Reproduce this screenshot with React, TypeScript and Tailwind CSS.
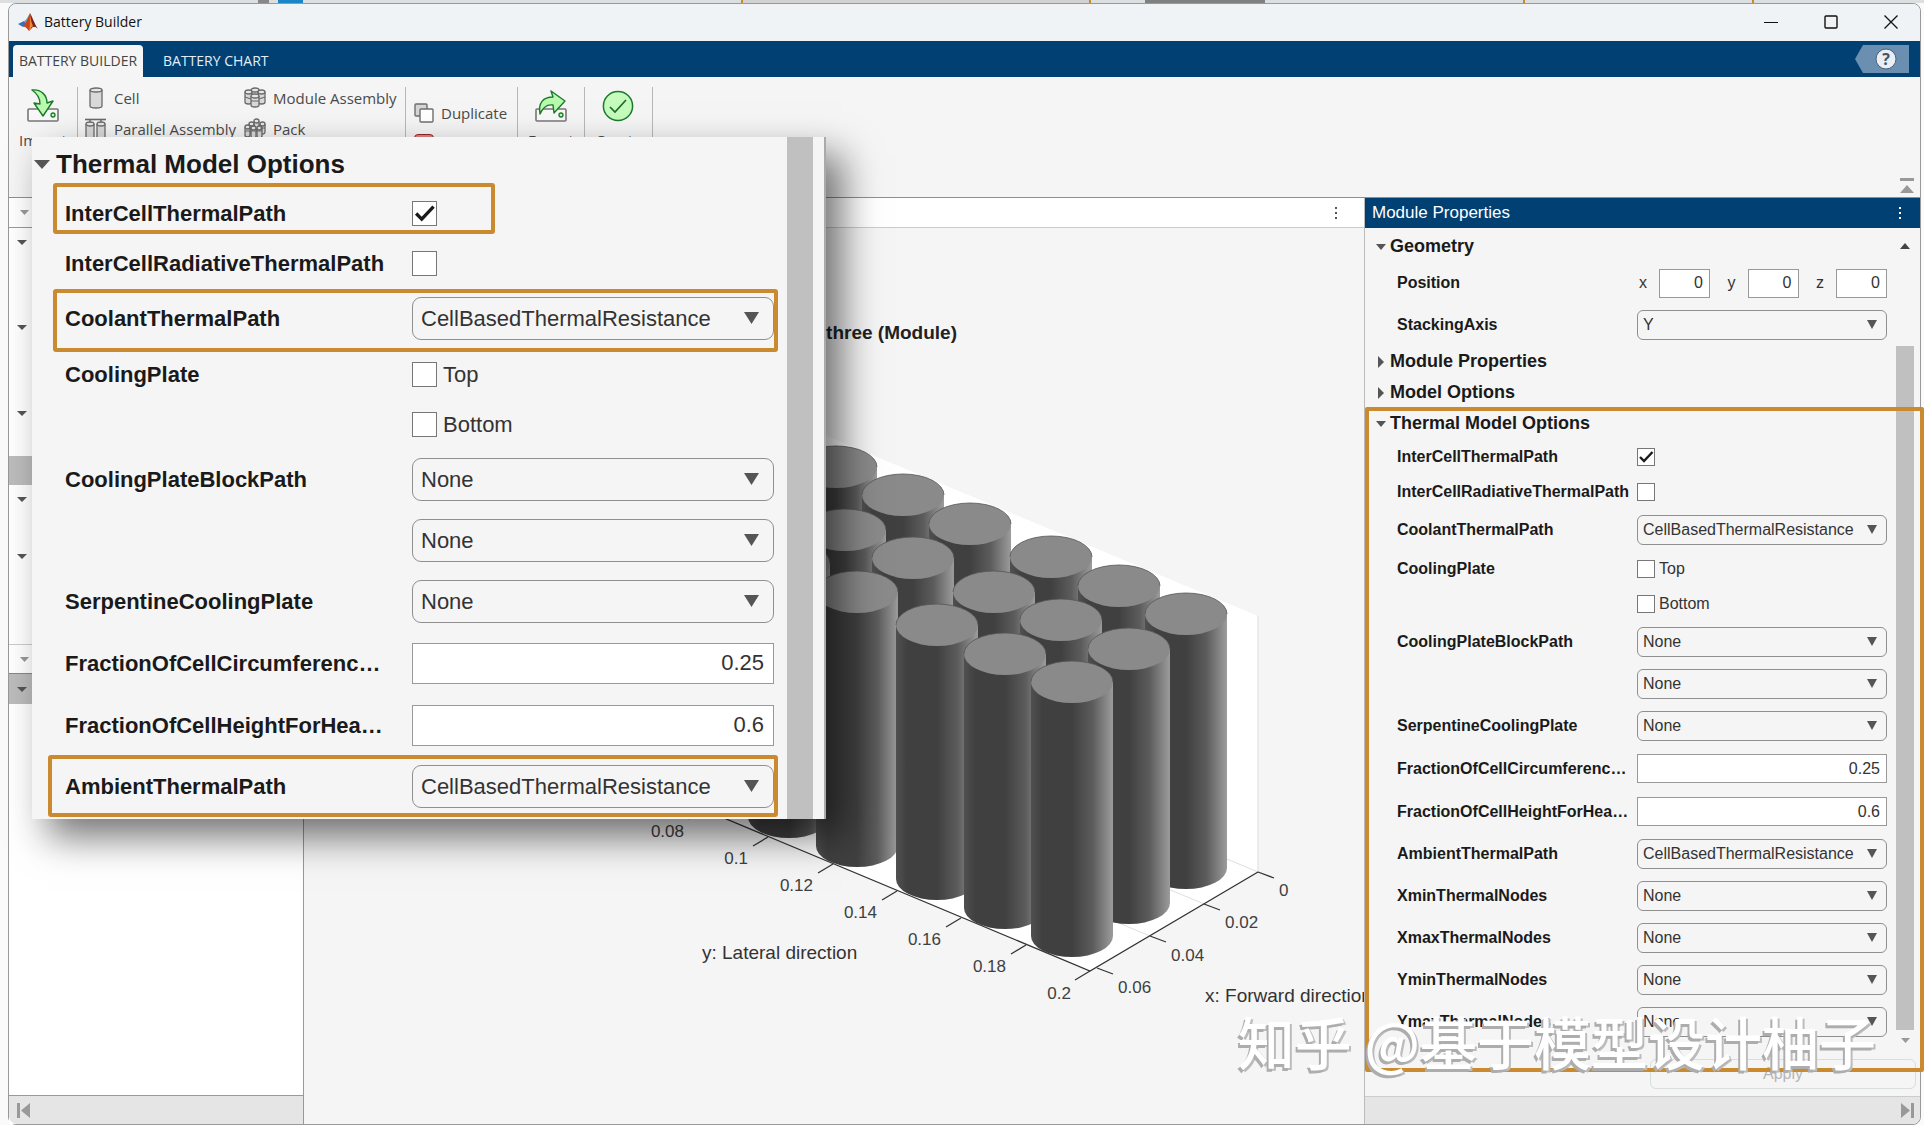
import type { ReactNode } from "react";

const uiFont = "font-['Liberation_Sans',Arial,sans-serif]";
const segoe = "font-['Open_Sans','Noto_Sans',sans-serif]";

/* ---------- icons ---------- */

function Logo() {
  return (
    <svg viewBox="0 0 20 20" className="h-5 w-5">
      <path d="M0 12 L6 9 L9 12 L5 15 Z" fill="#3d6fb6" />
      <path d="M6 9 C9 8 10 4 12 1 L9 12 Z" fill="#5aa7c9" />
      <path d="M12 1 C10 6 9 9 5 15 C8 14 9 17 11 19 C13 18 14 14 16 14 C14 9 13 4 12 1 Z" fill="#c9441c" />
      <path d="M12 1 C14 4 16 11 20 17 C17 14 15 14 13 17 C14 10 13 5 12 1 Z" fill="#7c2413" />
      <path d="M11 19 C12 15 12 10 12 4 C13 9 14 12 15 14 C13 15 12 18 11 19 Z" fill="#ee8a3a" />
    </svg>
  );
}

function DriveBox() {
  return (
    <>
      <rect x="1" y="20" width="30" height="12" rx="1" fill="#f8f8f8" stroke="#777" strokeWidth="1.6" />
      <circle cx="26" cy="26" r="2" fill="#b6ffa8" stroke="#1c7a2c" strokeWidth="1.3" />
    </>
  );
}

function ImportIcon() {
  return (
    <svg viewBox="0 0 32 34" className="h-[34px] w-8">
      <DriveBox />
      <path d="M5 1 C14 0 20 6 20 14 L26 12 L16 27 L7 14 L13 15 C13 9 11 5 5 1 Z" fill="#b9fbae" stroke="#1c7a2c" strokeWidth="1.4" strokeLinejoin="round" />
    </svg>
  );
}

function ExportIcon() {
  return (
    <svg viewBox="0 0 32 34" className="h-[34px] w-8">
      <DriveBox />
      <path d="M5 25 C3 14 8 8 18 8 L16 2 L30 12 L19 24 L18 16 C12 15 8 18 5 25 Z" fill="#b9fbae" stroke="#1c7a2c" strokeWidth="1.4" strokeLinejoin="round" />
    </svg>
  );
}

function CheckIcon() {
  return (
    <svg viewBox="0 0 32 34" className="h-[34px] w-8">
      <circle cx="16" cy="17" r="14.6" fill="#c5fbbd" stroke="#1c7a2c" strokeWidth="1.5" />
      <path d="M8 18 L13 23 L24 11" fill="none" stroke="#1f6b2c" strokeWidth="1.7" />
    </svg>
  );
}

function Can({ x, y, w, h }: { x: number; y: number; w: number; h: number }) {
  const r = w / 2;
  return (
    <g fill="#d9d9d9" stroke="#6a6a6a" strokeWidth="1.3">
      <path d={`M${x} ${y + 2} V${y + h - 2} A${r} 2 0 0 0 ${x + w} ${y + h - 2} V${y + 2}`} />
      <ellipse cx={x + r} cy={y + 2} rx={r} ry="2" fill="#e6e6e6" />
    </g>
  );
}

function CellIcon() {
  return (
    <svg viewBox="0 0 22 22" className="h-[22px] w-[22px]">
      <Can x={5} y={1} w={12} h={20} />
    </svg>
  );
}

function ParallelIcon() {
  return (
    <svg viewBox="0 0 22 22" className="h-[22px] w-[22px]">
      <path d="M0 1.5 H21" stroke="#6a6a6a" strokeWidth="1.6" />
      <path d="M5 1 V5 M16 1 V5" stroke="#6a6a6a" strokeWidth="1.4" />
      <Can x={1} y={4} w={8} h={17} />
      <Can x={12} y={4} w={8} h={17} />
    </svg>
  );
}

function ModuleIcon() {
  return (
    <svg viewBox="0 0 22 22" className="h-[22px] w-[22px]">
      <Can x={7} y={1} w={8} h={14} />
      <Can x={1} y={3} w={7} h={14} />
      <Can x={14} y={3} w={7} h={14} />
      <Can x={7} y={7} w={8} h={13} />
      <path d="M1 10 L7 12 M15 12 L21 10 M7 14 H15" stroke="#6a6a6a" strokeWidth="1.2" />
    </svg>
  );
}

function PackIcon() {
  return (
    <svg viewBox="0 0 22 22" className="h-[22px] w-[22px]">
      <Can x={10} y={1} w={5} h={11} />
      <Can x={5} y={4} w={5} h={11} />
      <Can x={16} y={4} w={5} h={12} />
      <Can x={1} y={7} w={5} h={12} />
      <Can x={7} y={8} w={5} h={12} />
      <Can x={13} y={8} w={5} h={12} />
      <path d="M1 13 H18 M16 10 H21" stroke="#6a6a6a" strokeWidth="1.2" />
    </svg>
  );
}

function DuplicateIcon() {
  return (
    <svg viewBox="0 0 20 20" className="h-5 w-5">
      <rect x="1" y="1" width="12" height="12" rx="1" fill="#d6d6d6" stroke="#6f6f6f" strokeWidth="1.4" />
      <rect x="6" y="6" width="13" height="13" rx="1" fill="#fff" stroke="#6f6f6f" strokeWidth="1.4" />
    </svg>
  );
}

function Kebab({ color }: { color: string }) {
  return (
    <svg viewBox="0 0 4 14" className="h-[14px] w-1" fill={color}>
      <rect x="1" y="1" width="2" height="2" />
      <rect x="1" y="6" width="2" height="2" />
      <rect x="1" y="11" width="2" height="2" />
    </svg>
  );
}

function Triangle({ className, dir = "down" }: { className: string; dir?: "down" | "right" | "up" }) {
  const points = { down: "0,0 10,0 5,10", right: "0,0 10,5 0,10", up: "0,10 10,10 5,0" }[dir];
  return (
    <svg viewBox="0 0 10 10" preserveAspectRatio="none" className={className} fill="currentColor">
      <polygon points={points} />
    </svg>
  );
}

/* ---------- property form ---------- */

const sizes = {
  sm: {
    text: "text-[16px]",
    indent: "pl-[32px]",
    label: "w-[240px]",
    title: "h-[31px] text-[18px] pl-[11px] gap-[4px]",
    arrow: "h-[6px] w-[10px]",
    arrowSide: "h-[12px] w-[6px] mx-[2px]",
    check: "h-[35px]",
    pick: "h-[42px]",
    field: "h-[43px]",
    box: "h-[18px] w-[18px]",
    gap: "gap-1",
    select: "h-[30px] rounded-md pl-[5px]",
    input: "h-[29px] pr-[6px]",
    caret: "h-[9px] w-[10px] right-[10px] top-[10px]",
    control: "w-[250px]",
  },
  lg: {
    text: "text-[22px]",
    indent: "pl-[33px]",
    label: "w-[347px]",
    title: "h-[48px] text-[26px] pl-[2px] gap-[6px]",
    arrow: "h-[9px] w-[16px]",
    arrowSide: "h-[16px] w-[9px]",
    check: "h-[50px]",
    pick: "h-[61px]",
    field: "h-[62px]",
    box: "h-[25px] w-[25px]",
    gap: "gap-[6px]",
    select: "h-[43px] rounded-[9px] pl-[8px]",
    input: "h-[41px] pr-[9px]",
    caret: "h-[12px] w-[15px] right-[15px] top-[15px]",
    control: "w-[362px]",
  },
};

type Size = keyof typeof sizes;

function Title({ size, children, open = true }: { size: Size; children: ReactNode; open?: boolean }) {
  const s = sizes[size];
  return (
    <button className={`flex w-full items-center text-left font-bold text-[#1a1a1a] ${s.title}`} aria-expanded={open}>
      <span className="text-[#555]">
        <Triangle className={open ? s.arrow : s.arrowSide} dir={open ? "down" : "right"} />
      </span>
      {children}
    </button>
  );
}

function Row({
  size,
  kind,
  label,
  id,
  mark,
  children,
}: {
  size: Size;
  kind: "check" | "pick" | "field";
  label: string;
  id: string;
  mark?: string;
  children: ReactNode;
}) {
  const s = sizes[size];
  return (
    <div className={`relative flex items-center ${s.indent} ${s.text} ${s[kind]}`}>
      <label htmlFor={id} className={`shrink-0 font-bold text-[#1a1a1a] ${s.label}`}>
        {label}
      </label>
      {children}
      {mark && <div className={`pointer-events-none absolute rounded-[3px] border-4 border-[#c98a30] ${mark}`} />}
    </div>
  );
}

function Check({ size, id, text, checked = false }: { size: Size; id: string; text?: string; checked?: boolean }) {
  const s = sizes[size];
  return (
    <span className={`flex items-center text-[#333] ${s.gap}`}>
      <span className={`relative ${s.box}`}>
        <input
          id={id}
          type="checkbox"
          defaultChecked={checked}
          className={`peer block appearance-none border border-[#777] bg-white ${s.box}`}
        />
        <svg viewBox="0 0 18 18" className="pointer-events-none absolute inset-0 hidden h-full w-full peer-checked:block">
          <path d="M3 9 L7 13 L15.5 4" fill="none" stroke="#1a1a1a" strokeWidth="2.4" />
        </svg>
      </span>
      {text && <label htmlFor={id}>{text}</label>}
    </span>
  );
}

function Pick({ size, id, value, label }: { size: Size; id: string; value: string; label?: string }) {
  const s = sizes[size];
  return (
    <span className={`relative ${s.control}`}>
      <select
        id={id}
        aria-label={label}
        defaultValue={value}
        className={`block w-full appearance-none border border-[#8f8f8f] bg-[#f5f5f5] text-[#333] ${s.select}`}
      >
        <option>{value}</option>
      </select>
      <Triangle className={`pointer-events-none absolute text-[#555] ${s.caret}`} />
    </span>
  );
}

function Field({ size, id, value }: { size: Size; id: string; value: string }) {
  const s = sizes[size];
  return (
    <input
      id={id}
      defaultValue={value}
      className={`border border-[#999] bg-white text-right text-[#333] ${s.control} ${s.input}`}
    />
  );
}

function ThermalOptions({ size, marked = false }: { size: Size; marked?: boolean }) {
  const p = `${size}-`;
  return (
    <>
      <Title size={size}>Thermal Model Options</Title>
      <Row size={size} kind="check" label="InterCellThermalPath" id={p + "inter"} mark={marked ? "left-[21px] -top-[5px] h-[51px] w-[442px]" : ""}>
        <Check size={size} id={p + "inter"} checked />
      </Row>
      <Row size={size} kind="check" label="InterCellRadiativeThermalPath" id={p + "radiative"}>
        <Check size={size} id={p + "radiative"} />
      </Row>
      <Row size={size} kind="pick" label="CoolantThermalPath" id={p + "coolant"} mark={marked ? "left-[21px] top-px h-[63px] w-[725px]" : ""}>
        <Pick size={size} id={p + "coolant"} value="CellBasedThermalResistance" />
      </Row>
      <Row size={size} kind="check" label="CoolingPlate" id={p + "top"}>
        <Check size={size} id={p + "top"} text="Top" />
      </Row>
      <Row size={size} kind="check" label="" id={p + "bottom"}>
        <Check size={size} id={p + "bottom"} text="Bottom" />
      </Row>
      <Row size={size} kind="pick" label="CoolingPlateBlockPath" id={p + "block"}>
        <Pick size={size} id={p + "block"} value="None" />
      </Row>
      <Row size={size} kind="pick" label="" id={p + "block2"}>
        <Pick size={size} id={p + "block2"} value="None" label="CoolingPlateBlockPath 2" />
      </Row>
      <Row size={size} kind="pick" label="SerpentineCoolingPlate" id={p + "serpentine"}>
        <Pick size={size} id={p + "serpentine"} value="None" />
      </Row>
      <Row size={size} kind="field" label="FractionOfCellCircumferenc…" id={p + "circ"}>
        <Field size={size} id={p + "circ"} value="0.25" />
      </Row>
      <Row size={size} kind="field" label="FractionOfCellHeightForHea…" id={p + "height"}>
        <Field size={size} id={p + "height"} value="0.6" />
      </Row>
      <Row size={size} kind="pick" label="AmbientThermalPath" id={p + "ambient"} mark={marked ? "left-[16px] -top-px h-[62px] w-[730px]" : ""}>
        <Pick size={size} id={p + "ambient"} value="CellBasedThermalResistance" />
      </Row>
    </>
  );
}

/* ---------- 3-D plot ---------- */

// centres of the cylinder tops, back row first
const cells = [
  [755, 433], [836, 467], [903, 495], [970, 524], [1051, 557], [1119, 586], [1186, 614],
  [778, 501], [845, 530], [913, 558], [994, 592], [1061, 620], [1129, 649],
  [722, 534], [789, 563], [857, 592], [937, 625], [1005, 654], [1072, 682],
];

const yTicks = [
  ["0.08", 704, 810, 684, 837],
  ["0.1", 768, 837, 748, 864],
  ["0.12", 833, 864, 813, 891],
  ["0.14", 897, 891, 877, 918],
  ["0.16", 961, 918, 941, 945],
  ["0.18", 1026, 945, 1006, 972],
  ["0.2", 1090, 971, 1071, 999],
] as const;

const xTicks = [
  ["0", 1258, 872, 1279, 896],
  ["0.02", 1204, 904, 1225, 928],
  ["0.04", 1150, 936, 1171, 961],
  ["0.06", 1097, 968, 1118, 993],
] as const;

function Plot() {
  return (
    <svg viewBox="304 228 1060 894" preserveAspectRatio="xMidYMin slice" className="block h-[894px] w-full">
      <defs>
        <linearGradient id="body">
          <stop offset="0" stopColor="#505050" />
          <stop offset="0.14" stopColor="#404040" />
          <stop offset="0.5" stopColor="#404040" />
          <stop offset="0.75" stopColor="#5c5c5c" />
          <stop offset="1" stopColor="#9c9c9c" />
        </linearGradient>
      </defs>
      <text x="957" y="339" textAnchor="end" fontSize="19" fontWeight="bold" fill="#222">three (Module)</text>
      <polygon points="1258,616 1258,872 1090,971 700,808 700,383" fill="#fff" />
      <path d="M1204 904 L700 693 M1150 936 L700 748 M1258 872 L700 639 M1258 616 V872" fill="none" stroke="#dedede" />
      {cells.map(([x, y]) => (
        <g key={`${x}-${y}`}>
          <path d={`M${x - 41} ${y} V${y + 254} A41 21 0 0 0 ${x + 41} ${y + 254} V${y} Z`} fill="url(#body)" />
          <ellipse cx={x} cy={y} rx="41" ry="21" fill="#8a8a8a" />
          <path d={`M${x - 41} ${y} A41 21 0 0 1 ${x + 41} ${y}`} fill="none" stroke="#555" strokeWidth="0.8" />
        </g>
      ))}
      <path d="M1258 872 L1090 971 L700 808" fill="none" stroke="#333" strokeWidth="1.3" />
      <g fontSize="17" fill="#404040">
        {yTicks.map(([t, x, y, tx, ty]) => (
          <g key={t}>
            <path d={`M${x} ${y} l-15 9`} stroke="#333" strokeWidth="1.3" />
            <text x={tx} y={ty} textAnchor="end">{t}</text>
          </g>
        ))}
        {xTicks.map(([t, x, y, tx, ty]) => (
          <g key={t}>
            <path d={`M${x} ${y} l16 6`} stroke="#333" strokeWidth="1.3" />
            <text x={tx} y={ty}>{t}</text>
          </g>
        ))}
      </g>
      <text x="702" y="959" fontSize="19" fill="#333">y: Lateral direction</text>
      <text x="1205" y="1002" fontSize="19" fill="#333">x: Forward direction</text>
    </svg>
  );
}

/* ---------- window parts ---------- */

function TitleBar() {
  return (
    <header className="flex h-[37px] items-center rounded-t-lg bg-[#f0f3f5] pb-[2px] pl-[9px] pr-[22px]">
      <Logo />
      <h1 className={`ml-[6px] text-[14px] text-[#111] ${segoe}`}>Battery Builder</h1>
      <div className="ml-auto flex items-center gap-[46px]">
        <button aria-label="Minimize">
          <svg viewBox="0 0 14 14" className="h-[14px] w-[14px]"><path d="M0 7.5 H14" stroke="#111" /></svg>
        </button>
        <button aria-label="Maximize">
          <svg viewBox="0 0 14 14" className="h-[14px] w-[14px]"><rect x="1" y="1" width="12" height="12" rx="1" fill="none" stroke="#111" strokeWidth="1.4" /></svg>
        </button>
        <button aria-label="Close">
          <svg viewBox="0 0 14 14" className="h-[14px] w-[14px]"><path d="M0.5 0.5 L13.5 13.5 M13.5 0.5 L0.5 13.5" stroke="#111" strokeWidth="1.3" /></svg>
        </button>
      </div>
    </header>
  );
}

function TabBar() {
  return (
    <nav className={`flex h-9 items-end bg-[#004073] pl-1 text-[14px] ${segoe}`}>
      <button className="h-8 w-[130px] rounded-t-sm bg-[#f5f5f5] pb-[2px] text-[#444]">BATTERY BUILDER</button>
      <button className="ml-[20px] h-8 pb-[2px] text-[#e4eef6]">BATTERY CHART</button>
      <button aria-label="Help" className="mb-1 ml-auto mr-[11px]">
        <svg viewBox="0 0 54 28" className="h-7 w-[54px]">
          <polygon points="0,14 8,0 54,0 54,28 8,28" fill="#6a8fb0" />
          <circle cx="31" cy="14" r="10" fill="#e9eff4" stroke="#48637c" />
          <text x="31" y="20" textAnchor="middle" fontSize="16" fontWeight="bold" fill="#41566b">?</text>
        </svg>
      </button>
    </nav>
  );
}

function Tool({ icon, children }: { icon: ReactNode; children: ReactNode }) {
  return (
    <button className="flex h-[22px] items-center gap-[7px] whitespace-nowrap">
      {icon}
      {children}
    </button>
  );
}

function BigTool({ icon, children }: { icon: ReactNode; children: ReactNode }) {
  return (
    <button className="flex flex-col items-center gap-[6px] self-start pt-[2px]">
      {icon}
      <span>{children}</span>
    </button>
  );
}

function Toolbar() {
  return (
    <div className={`flex h-[121px] border-b border-[#8f8f8f] bg-[#f5f5f5] pb-1 pt-[10px] text-[15px] text-[#4a4a4a] ${segoe}`}>
      <div className="flex w-[69px] justify-center border-r border-[#b8b8b8]">
        <BigTool icon={<ImportIcon />}>Import</BigTool>
      </div>
      <div className="grid w-[328px] grid-cols-[159px_auto] content-start gap-y-[9px] border-r border-[#b8b8b8] pl-[7px]">
        <Tool icon={<CellIcon />}>Cell</Tool>
        <Tool icon={<ModuleIcon />}>Module Assembly</Tool>
        <Tool icon={<ParallelIcon />}>Parallel Assembly</Tool>
        <Tool icon={<PackIcon />}>Pack</Tool>
      </div>
      <div className="flex w-[112px] flex-col gap-[9px] border-r border-[#b8b8b8] pl-2 pt-[15px]">
        <Tool icon={<DuplicateIcon />}>Duplicate</Tool>
        <Tool icon={<span className="h-5 w-5 rounded-sm border border-[#8c2a2a] bg-[#e88080]" />}>Delete</Tool>
      </div>
      <div className="flex w-[67px] justify-center border-r border-[#b8b8b8]">
        <BigTool icon={<ExportIcon />}>Export</BigTool>
      </div>
      <div className="flex w-[68px] justify-center border-r border-[#b8b8b8]">
        <BigTool icon={<CheckIcon />}>Create</BigTool>
      </div>
      <button aria-label="Collapse toolstrip" className="ml-auto mr-[6px] self-end text-[#999]">
        <span className="mb-1 block h-[3px] w-[14px] bg-current" />
        <Triangle className="h-2 w-[14px]" dir="up" />
      </button>
    </div>
  );
}

const tree = [
  "h-[29px]", "h-[56px]", "h-[29px]", "h-[57px]", "h-[29px]", "h-[57px]", "h-[29px]", "h-[28px]", "h-[29px]",
];

function Browser() {
  return (
    <aside className="flex w-[295px] shrink-0 flex-col border-r border-[#999] bg-white">
      <div className="flex h-[30px] items-center border-b border-[#999] pl-[11px] text-[#999]">
        <Triangle className="h-[5px] w-[9px]" />
      </div>
      <div className="h-[417px] border-b border-[#ccc] text-[#555]">
        {tree.map((h, i) => (
          <div key={i} className={`flex items-center ${h}`}>
            {i % 2 === 0 && <Triangle className="ml-2 h-[5px] w-[10px]" />}
            {i === 5 && <div className="h-[29px] flex-1 self-end bg-[#bcbcbc]" />}
          </div>
        ))}
      </div>
      <div className="flex h-[29px] items-center border-b border-[#888] pl-[11px] text-[#999]">
        <Triangle className="h-[5px] w-[9px]" />
      </div>
      <div className="flex h-[30px] items-center bg-[#bcbcbc] pl-2 text-[#555]">
        <Triangle className="h-[5px] w-[10px]" />
      </div>
      <div className="mt-auto flex h-[29px] items-center rounded-bl-lg border-t border-[#999] bg-[#e5e5e5] pl-2">
        <button aria-label="Collapse left">
          <svg viewBox="0 0 13 15" className="h-[15px] w-[13px]" fill="#999"><path d="M0 0 H3 V15 H0 Z M13 0 V15 L4 7.5 Z" /></svg>
        </button>
      </div>
    </aside>
  );
}

function Properties() {
  return (
    <section className="flex w-[556px] shrink-0 flex-col border-l border-[#bbb]">
      <div className="flex h-[30px] items-center justify-between bg-[#004073] pl-[7px] pr-[18px] text-[17px] text-white">
        <h2>Module Properties</h2>
        <button aria-label="Panel menu"><Kebab color="#fff" /></button>
      </div>
      <div className="relative flex">
        <div className="w-[530px] pt-[3px]">
          <Title size="sm">Geometry</Title>
          <div className="flex h-[42px] items-center pl-[32px] text-[16px] text-[#333]">
            <span className="w-[242px] font-bold text-[#1a1a1a]">Position</span>
            <div className="flex w-[248px] justify-between">
              {["x", "y", "z"].map((axis) => (
                <label key={axis} className="flex items-center gap-[12px]">
                  {axis}
                  <input defaultValue="0" className="h-[29px] w-[51px] border border-[#999] bg-white pr-[6px] text-right" />
                </label>
              ))}
            </div>
          </div>
          <Row size="sm" kind="pick" label="StackingAxis" id="stacking">
            <Pick size="sm" id="stacking" value="Y" />
          </Row>
          <Title size="sm" open={false}>Module Properties</Title>
          <Title size="sm" open={false}>Model Options</Title>
          <ThermalOptions size="sm" />
          {["Xmin", "Xmax", "Ymin", "Ymax"].map((n) => (
            <Row key={n} size="sm" kind="pick" label={`${n}ThermalNodes`} id={n}>
              <Pick size="sm" id={n} value="None" />
            </Row>
          ))}
        </div>
        <div className="flex w-[20px] flex-col items-center pt-[15px] text-[#444]">
          <Triangle className="h-[6px] w-[10px]" dir="up" />
          <div className="mt-[97px] w-[18px] flex-1 bg-[#c0c0c0]" />
          <Triangle className="mt-[8px] h-[5px] w-[9px] shrink-0 text-[#999]" />
        </div>
        <div className="pointer-events-none absolute -bottom-[29px] -right-1 left-0 top-[179px] rounded-[2px] border-4 border-[#c98a30]" />
      </div>
      <div className="mt-[16px] flex justify-end pr-1">
        <button disabled className="h-[30px] w-[266px] rounded-md border border-[#d8dde0] text-[16px] text-[#b5b5b5]">Apply</button>
      </div>
      <div className="mt-auto flex h-[28px] items-center justify-end rounded-br-lg border-t border-[#ccc] bg-[#e5e5e5] pr-[6px]">
        <button aria-label="Collapse right">
          <svg viewBox="0 0 13 15" className="h-[15px] w-[13px]" fill="#999"><path d="M10 0 H13 V15 H10 Z M0 0 V15 L9 7.5 Z" /></svg>
        </button>
      </div>
    </section>
  );
}

// enlarged copy of the thermal section, floating over the window
function Callout() {
  return (
    <div className="absolute left-[32px] top-[137px] flex w-[794px] border-r-2 border-[#aaa] bg-[#f5f5f5] shadow-[16px_18px_36px_rgba(0,0,0,0.55)]">
      <div className="w-[755px] pb-[2px] pt-[3px]">
        <ThermalOptions size="lg" marked />
      </div>
      <div className="w-[26px] bg-[#c0c0c0]" />
    </div>
  );
}

export default function App() {
  return (
    <div className={`relative flex min-h-screen flex-col overflow-hidden bg-[#fafafa] ${uiFont}`}>
      {/* sliver of the window behind */}
      <div className="flex h-[3px] bg-[#dcdfe0]">
        <div className="ml-[258px] w-[11px] bg-[#888]" />
        <div className="ml-[9px] w-[25px] bg-[#1b86c6]" />
        <div className="ml-[438px] w-[350px] border-x-2 border-[#c98a30] bg-[#d2d2d2]" />
        <div className="ml-[54px] w-[120px] bg-[#808080]" />
        <div className="ml-[258px] w-[231px] border-x-2 border-[#c98a30]" />
      </div>
      <div className="ml-2 mr-[3px] flex flex-1 flex-col rounded-lg border border-[#999] bg-[#f5f5f5]">
        <TitleBar />
        <TabBar />
        <Toolbar />
        <main className="flex flex-1">
          <Browser />
          <section className="min-w-0 flex-1">
            <div className="flex h-[30px] items-center justify-end border-b border-[#ccc] bg-white pr-[26px]">
              <button aria-label="Figure menu"><Kebab color="#555" /></button>
            </div>
            <Plot />
          </section>
          <Properties />
        </main>
      </div>
      <Callout />
      <p className="pointer-events-none absolute bottom-[49px] right-[48px] whitespace-nowrap font-['Noto_Sans_CJK_SC',sans-serif] text-[57px] font-medium leading-[72px] text-white [text-shadow:-2px_3px_0_#adadad,2px_2px_0_#bcbcbc]">
        知乎 @基于模型设计柚子
      </p>
    </div>
  );
}
